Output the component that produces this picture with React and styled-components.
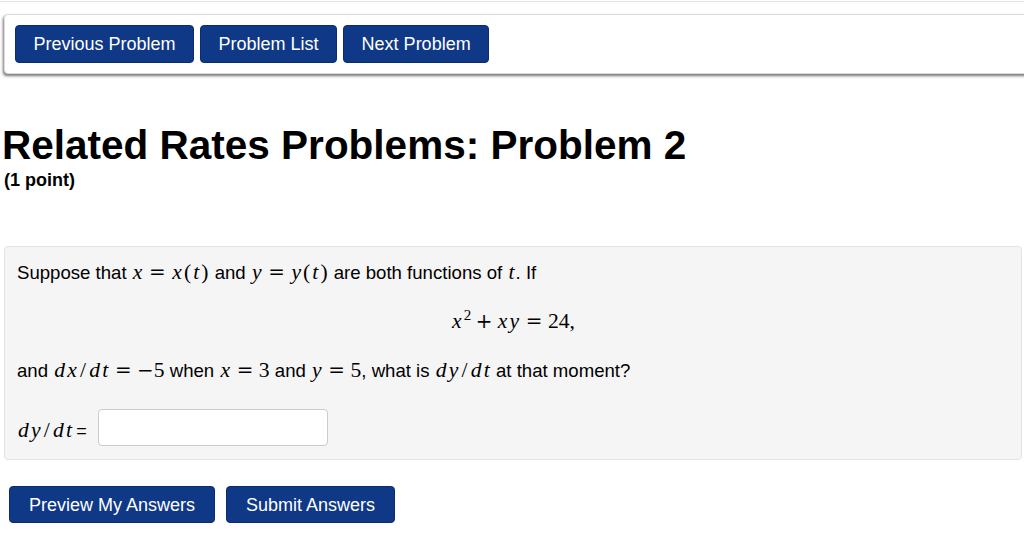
import React from "react";
import styled, { createGlobalStyle } from "styled-components";

const GlobalStyle = createGlobalStyle`
  html, body {
    margin: 0;
    padding: 0;
    background: #ffffff;
    overflow-x: hidden;
  }
  body {
    font-family: "Liberation Sans", Arial, Helvetica, sans-serif;
    color: #000000;
  }
`;

const Page = styled.div`
  padding: 0 2px 30px 4px;
`;

const TopRule = styled.div`
  height: 1px;
  margin: 1px -6px 0 -4px;
  background: #e4e4e4;
`;

const NavWell = styled.div`
  display: flex;
  gap: 6px;
  margin: 12px -40px 0 0;
  padding: 10px;
  border: 1px solid #dcdcdc;
  border-radius: 4px 0 0 4px;
  background: #ffffff;
  box-shadow: -1px 2px 3px rgba(0, 0, 0, 0.55);
`;

const Button = styled.button`
  height: ${(p) => (p.$nav ? "38px" : "37px")};
  padding: 0 ${(p) => (p.$nav ? "17.5px" : "19px")};
  border: 1px solid #0a2c6e;
  border-radius: 4px;
  background: #0f3886;
  color: #ffffff;
  font-family: "Liberation Sans", Arial, sans-serif;
  font-size: 18px;
  line-height: 1;
  cursor: pointer;
`;

const Title = styled.h1`
  margin: 49px 0 0 -2px;
  font-size: 40.5px;
  line-height: 44px;
  font-weight: 700;
`;

const Points = styled.div`
  margin-top: 3px;
  font-size: 18px;
  line-height: 21px;
  font-weight: 700;
`;

const ProblemBox = styled.div`
  margin-top: 55px;
  padding: 13px 12px 13px;
  border: 1px solid #e3e3e3;
  border-radius: 4px;
  background: #f5f5f5;
  font-size: 18.6px;
  line-height: 26px;
`;

const Para = styled.div``;

const Display = styled.div`
  margin: 23px 0 23px;
  text-align: center;
`;

const AnswerRow = styled.div`
  display: flex;
  align-items: center;
  gap: 11px;
  margin-top: 25px;
`;

const AnswerLabel = styled.span`
  display: inline-flex;
  align-items: baseline;
  padding-top: 6px;
`;

const AnswerInput = styled.input`
  box-sizing: border-box;
  width: 230px;
  height: 37px;
  padding: 4px 8px;
  border: 1px solid #cccccc;
  border-radius: 4px;
  background: #ffffff;
  font-size: 16px;
`;

const Actions = styled.div`
  display: flex;
  gap: 11px;
  margin: 26px 0 0 5px;
`;

/* inline math, spaced to sit like the MathJax output */
const M = styled.span`
  font-family: "Liberation Serif", "Times New Roman", serif;
  font-size: 21.6px;
  line-height: 1;
  white-space: nowrap;
`;

const V = styled.i`
  font-style: italic;
  padding: 0 0.05em;
`;

const P = styled.span`
  padding: 0 ${(p) => (p.$wide ? "0.1em" : "0.045em")};
`;

const Op = styled.span`
  font-family: "DejaVu Serif", serif;
  font-size: 0.92em;
  margin: 0 ${(p) => (p.$bin ? "0.22em" : "0.28em")};
`;

const Minus = styled.span`
  font-family: "DejaVu Serif", serif;
  font-size: 0.92em;
`;

const Sup = styled.sup`
  font-size: 0.7em;
  line-height: 0;
  vertical-align: 0.55em;
  margin-left: 1px;
`;

const Eq = styled.span`
  font-family: "Liberation Sans", Arial, sans-serif;
  font-size: 18px;
  margin-left: 3px;
`;

const Frac = ({ top, bottom }) => (
  <>
    <V>{top[0]}</V>
    <V>{top[1]}</V>
    <P $wide>/</P>
    <V>{bottom[0]}</V>
    <V>{bottom[1]}</V>
  </>
);

export default function App() {
  return (
    <>
      <GlobalStyle />
      <Page>
        <TopRule />
        <NavWell>
          <Button $nav>Previous Problem</Button>
          <Button $nav>Problem List</Button>
          <Button $nav>Next Problem</Button>
        </NavWell>

        <Title>Related Rates Problems: Problem 2</Title>
        <Points>(1 point)</Points>

        <ProblemBox>
          <Para>
            Suppose that{" "}
            <M>
              <V>x</V>
              <Op>=</Op>
              <V>x</V>
              <P>(</P>
              <V>t</V>
              <P>)</P>
            </M>{" "}
            and{" "}
            <M>
              <V>y</V>
              <Op>=</Op>
              <V>y</V>
              <P>(</P>
              <V>t</V>
              <P>)</P>
            </M>{" "}
            are both functions of{" "}
            <M>
              <V>t</V>
            </M>
            . If
          </Para>
          <Display>
            <M>
              <V>x</V>
              <Sup>2</Sup>
              <Op $bin>+</Op>
              <V>x</V>
              <V>y</V>
              <Op>=</Op>
              24,
            </M>
          </Display>
          <Para>
            and{" "}
            <M>
              <Frac top="dx" bottom="dt" />
              <Op>=</Op>
              <Minus>−</Minus>5
            </M>{" "}
            when{" "}
            <M>
              <V>x</V>
              <Op>=</Op>3
            </M>{" "}
            and{" "}
            <M>
              <V>y</V>
              <Op>=</Op>5
            </M>
            , what is{" "}
            <M>
              <Frac top="dy" bottom="dt" />
            </M>{" "}
            at that moment?
          </Para>
          <AnswerRow>
            <AnswerLabel>
              <M>
                <Frac top="dy" bottom="dt" />
              </M>
              <Eq>=</Eq>
            </AnswerLabel>
            <AnswerInput type="text" />
          </AnswerRow>
        </ProblemBox>

        <Actions>
          <Button>Preview My Answers</Button>
          <Button>Submit Answers</Button>
        </Actions>
      </Page>
    </>
  );
}
